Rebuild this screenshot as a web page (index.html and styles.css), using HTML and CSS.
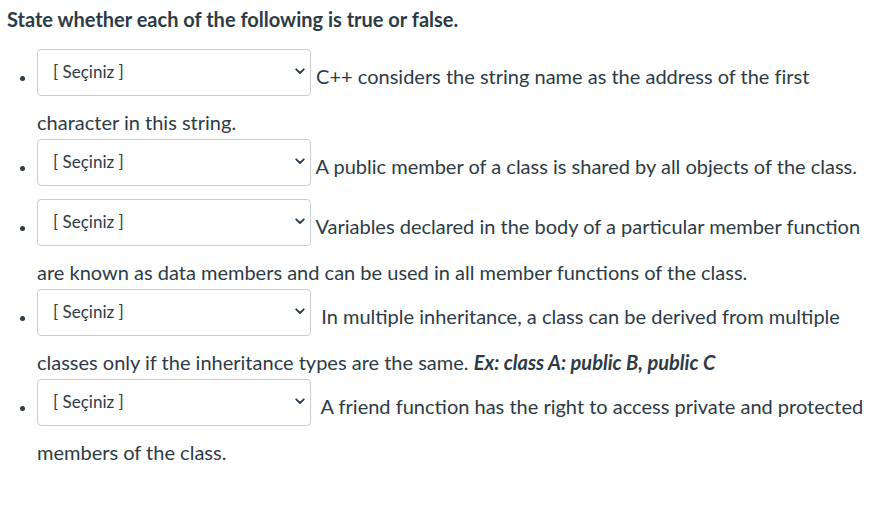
FILE: index.html
```html
<!DOCTYPE html>
<html lang="tr">
<head>
<meta charset="utf-8">
<title>Quiz</title>
<link rel="stylesheet" href="styles.css">
</head>
<body>
<div class="question">
  <p class="prompt">State whether each of the following is true or false.</p>
  <ul class="items">
    <li><span class="select"><span class="select-label">[ Seçiniz ]</span><svg class="chev" width="10" height="7" viewBox="0 0 10 7"><path d="M1.2 1.3 L5 5 L8.8 1.3" fill="none" stroke="#2d3b45" stroke-width="1.8" stroke-linecap="round" stroke-linejoin="round"/></svg></span> C++ considers the string name as the address of the first character in this string.</li>
    <li><span class="select"><span class="select-label">[ Seçiniz ]</span><svg class="chev" width="10" height="7" viewBox="0 0 10 7"><path d="M1.2 1.3 L5 5 L8.8 1.3" fill="none" stroke="#2d3b45" stroke-width="1.8" stroke-linecap="round" stroke-linejoin="round"/></svg></span> A public member of a class is shared by all objects of the class.</li>
    <li><span class="select"><span class="select-label">[ Seçiniz ]</span><svg class="chev" width="10" height="7" viewBox="0 0 10 7"><path d="M1.2 1.3 L5 5 L8.8 1.3" fill="none" stroke="#2d3b45" stroke-width="1.8" stroke-linecap="round" stroke-linejoin="round"/></svg></span> Variables declared in the body of a particular member function are known as data members and can be used in all member functions of the class.</li>
    <li><span class="select"><span class="select-label">[ Seçiniz ]</span><svg class="chev" width="10" height="7" viewBox="0 0 10 7"><path d="M1.2 1.3 L5 5 L8.8 1.3" fill="none" stroke="#2d3b45" stroke-width="1.8" stroke-linecap="round" stroke-linejoin="round"/></svg></span>&nbsp; In multiple inheritance, a class can be derived from multiple classes only if the inheritance types are the same. <strong><em>Ex: class A: public B, public C</em></strong></li>
    <li><span class="select"><span class="select-label">[ Seçiniz ]</span><svg class="chev" width="10" height="7" viewBox="0 0 10 7"><path d="M1.2 1.3 L5 5 L8.8 1.3" fill="none" stroke="#2d3b45" stroke-width="1.8" stroke-linecap="round" stroke-linejoin="round"/></svg></span>&nbsp; A friend function has the right to access private and protected members of the class.</li>
  </ul>
</div>
</body>
</html>
```

FILE: styles.css
```css
html, body {
  margin: 0;
  padding: 0;
  background: #ffffff;
}

body {
  font-family: Lato, "Open Sans", sans-serif;
  color: #2d3b45;
  font-size: 20px;
  line-height: 30px;
}

.question {
  padding: 4px 8px 0 7px;
}

.prompt {
  margin: 0 0 15px 0;
  font-weight: 700;
  font-size: 20px;
}

.items {
  margin: 0;
  padding: 0 0 0 30px;
}

.items li {
  margin: 0 0 2px 0;
}

.items li::marker {
  font-size: 15px;
}

.select {
  display: inline-flex;
  align-items: center;
  justify-content: space-between;
  box-sizing: border-box;
  width: 274px;
  height: 47px;
  padding: 0 5px 0 15px;
  margin-bottom: 11px;
  border: 1px solid #c7cdd1;
  border-radius: 4px;
  background: #ffffff;
  vertical-align: 6px;
  font-size: 17px;
  line-height: 20px;
}

.select-label {
  margin-top: -1px;
}

.chev {
  display: block;
  margin-top: -2px;
}
```
